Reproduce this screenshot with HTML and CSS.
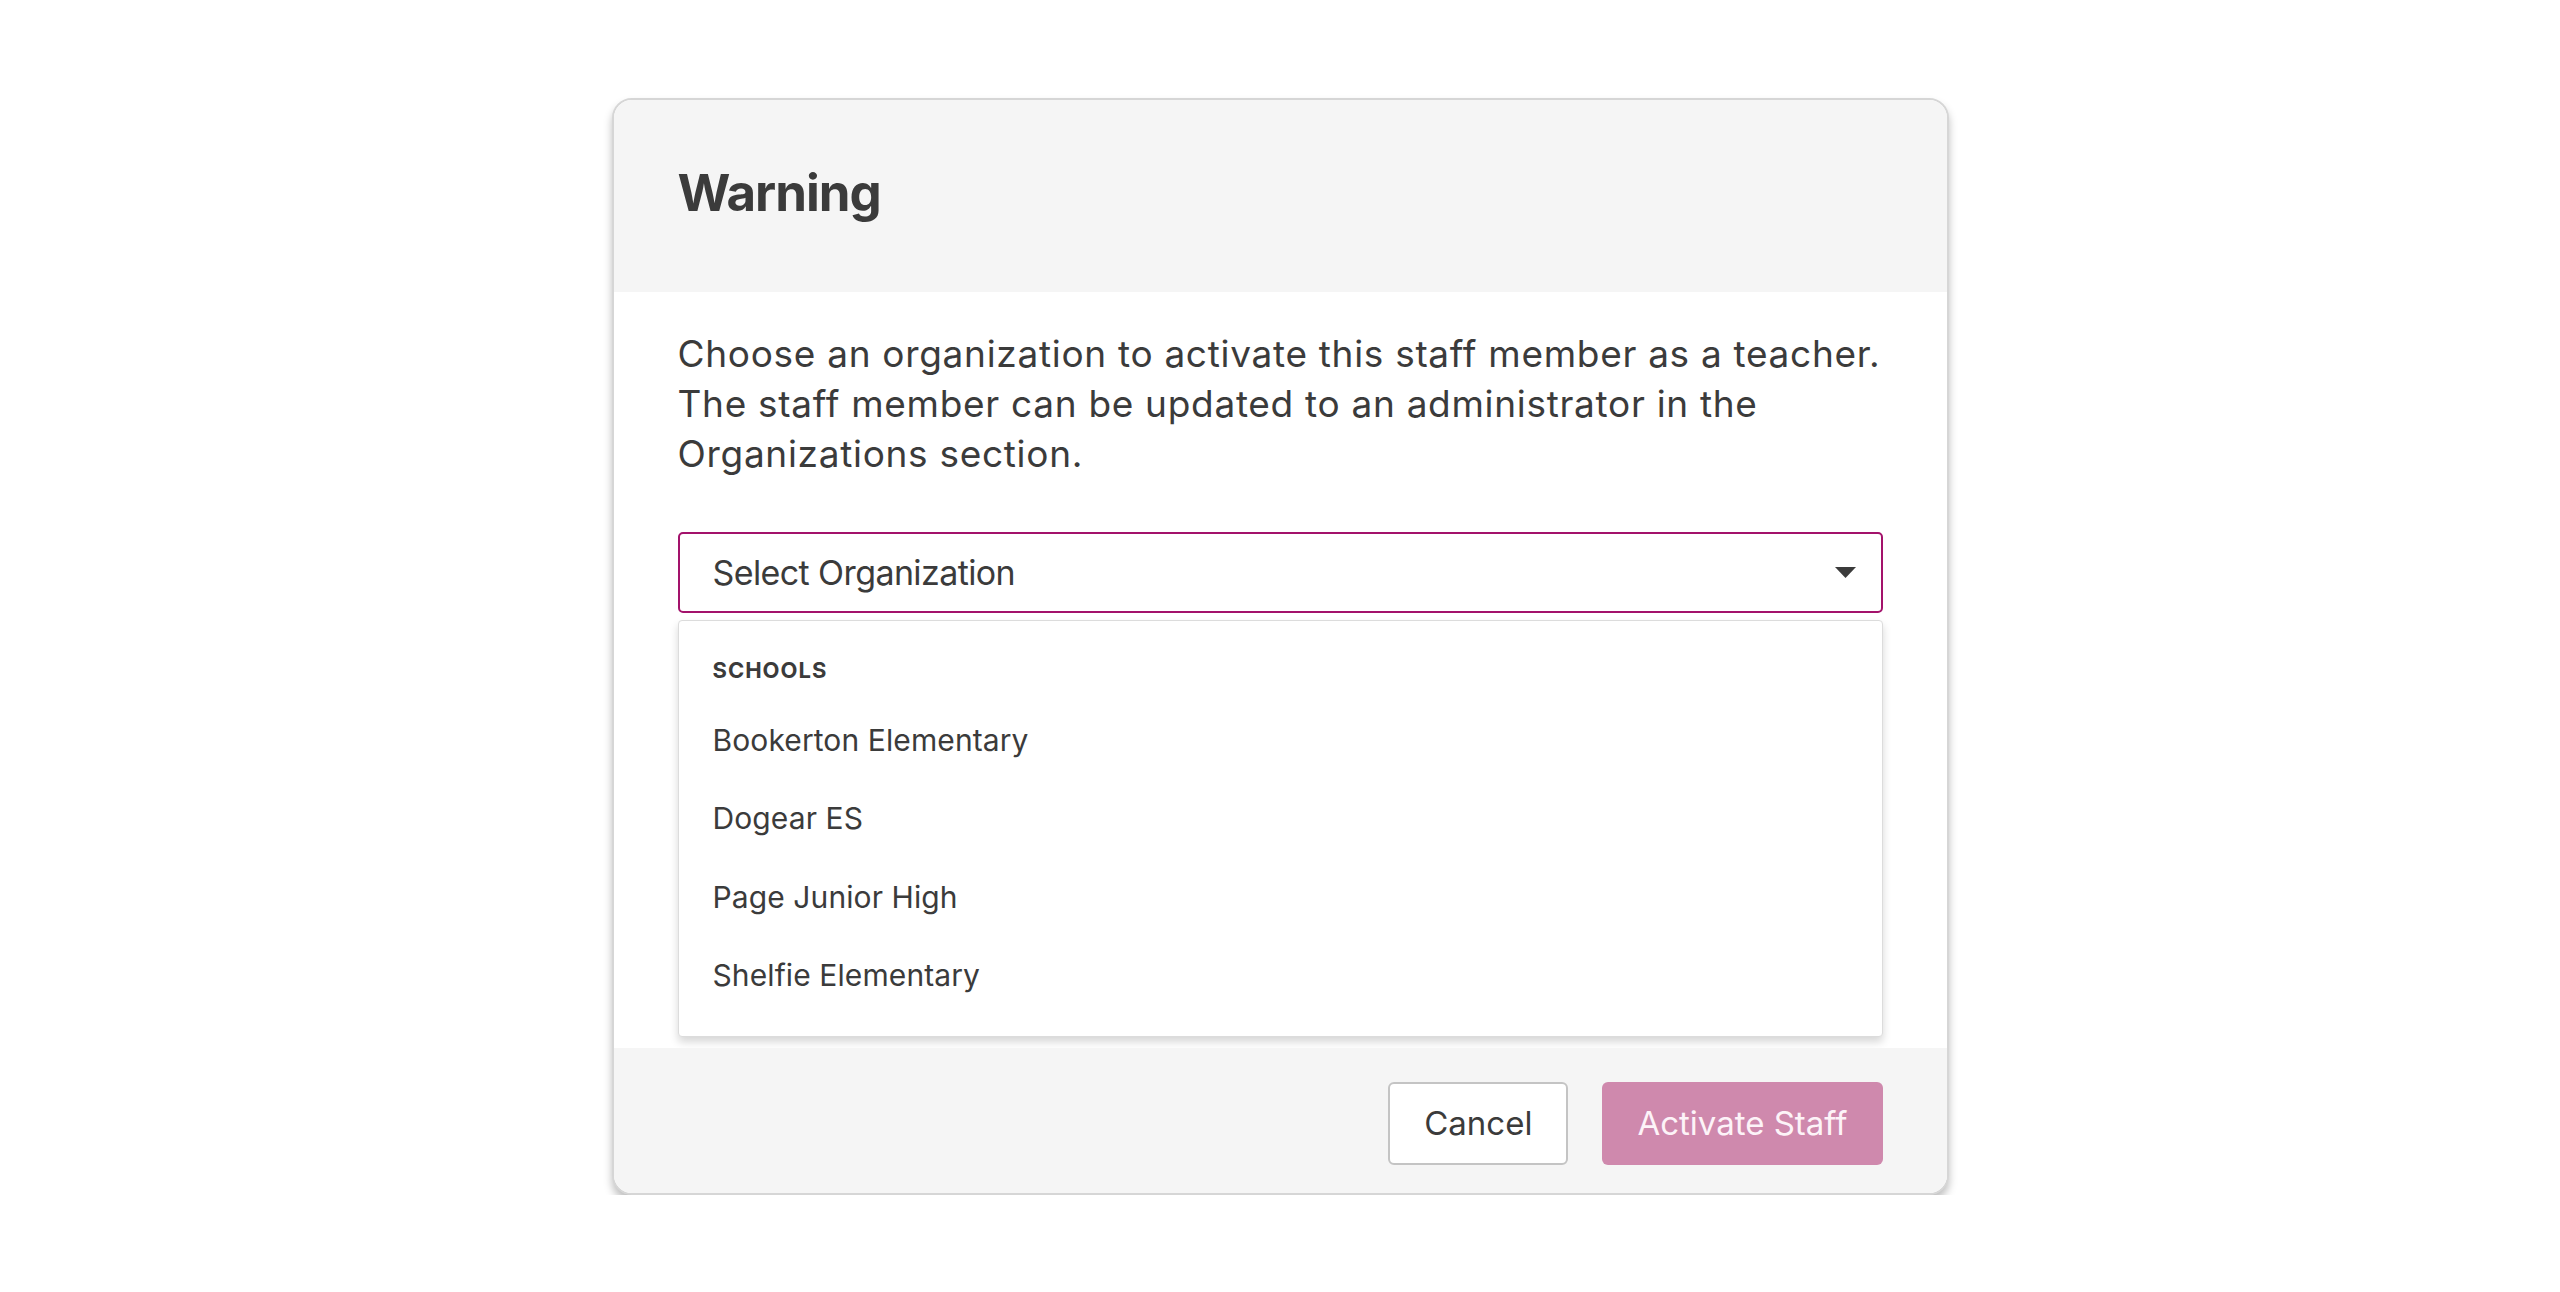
FILE: index.html
```html
<!DOCTYPE html>
<html lang="en">
<head>
    <meta charset="UTF-8">
    <meta name="viewport" content="width=device-width, initial-scale=1.0">
    <title>Warning</title>
    <link rel="stylesheet" href="styles.css">
</head>
<body>

    <div class="modal">
        <div class="modal-header">
            <h2 class="modal-title">Warning</h2>
        </div>

        <div class="modal-body">
            <p class="message">Choose an organization to activate this staff member as a teacher. The staff member can be updated to an administrator in the Organizations section.</p>

            <div class="select">
                <div class="select-control">
                    <span class="placeholder">Select Organization</span>
                    <svg class="caret" width="21" height="11" viewBox="0 0 21 11">
                        <path d="M0 0 L21 0 L10.5 11 Z" />
                    </svg>
                </div>

                <div class="select-menu">
                    <div class="group-label">SCHOOLS</div>
                    <div class="option">Bookerton Elementary</div>
                    <div class="option">Dogear ES</div>
                    <div class="option">Page Junior High</div>
                    <div class="option">Shelfie Elementary</div>
                </div>
            </div>
        </div>

        <div class="modal-footer">
            <button class="button cancel">Cancel</button>
            <button class="button primary">Activate Staff</button>
        </div>
    </div>

</body>
</html>
```

FILE: styles.css
```css
body {
    font-family: Inter, "Noto Sans", sans-serif;
    margin: 0;
    padding-top: 98px;
    background-color: #fff;
    color: #3b3b3b;
}
.modal {
    width: 1337px;
    box-sizing: border-box;
    margin: 0 auto;
    border: 2px solid #d6d6d6;
    border-radius: 20px;
    background-color: #fff;
    box-shadow: 0 6px 9px rgba(0, 0, 0, 0.26);
    overflow: hidden;
}
.modal-header {
    background-color: #f5f5f5;
    padding: 62px 64px 68px;
}
.modal-title {
    margin: 0;
    font-size: 51px;
    line-height: 62px;
    font-weight: 700;
    letter-spacing: -1px;
}
.modal-body {
    padding: 37px 64px 11px;
}
.message {
    margin: 0 0 53px;
    font-size: 37px;
    line-height: 50px;
    letter-spacing: 0.7px;
}
.select-control {
    display: flex;
    align-items: center;
    justify-content: space-between;
    height: 81px;
    box-sizing: border-box;
    padding: 0 25px 0 33px;
    border: 2px solid #a3126b;
    border-radius: 5px;
}
.placeholder {
    font-size: 34px;
    letter-spacing: -0.6px;
}
.caret {
    fill: #3b3b3b;
}
.select-menu {
    margin-top: 7px;
    padding: 34px 0 21px;
    border: 1px solid #dcdcdc;
    border-radius: 4px;
    background-color: #fff;
    box-shadow: 0 5px 8px rgba(0, 0, 0, 0.16);
}
.group-label {
    padding: 0 34px;
    margin-bottom: 16px;
    font-size: 22px;
    line-height: 30px;
    font-weight: 700;
    letter-spacing: 1px;
}
.option {
    padding: 0 34px;
    font-size: 30px;
    line-height: 78.4px;
    letter-spacing: 0.1px;
}
.modal-footer {
    display: flex;
    justify-content: flex-end;
    gap: 34px;
    padding: 34px 64px 28px;
    background-color: #f5f5f5;
}
.button {
    height: 83px;
    font-family: inherit;
    font-size: 33px;
    border-radius: 6px;
    cursor: pointer;
}
.button.cancel {
    padding: 0 34px;
    border: 2px solid #c4c4c4;
    background-color: #fff;
    color: #3b3b3b;
}
.button.primary {
    padding: 0 35px;
    border: none;
    background-color: #cf89ad;
    color: #fdf3f8;
}
```
